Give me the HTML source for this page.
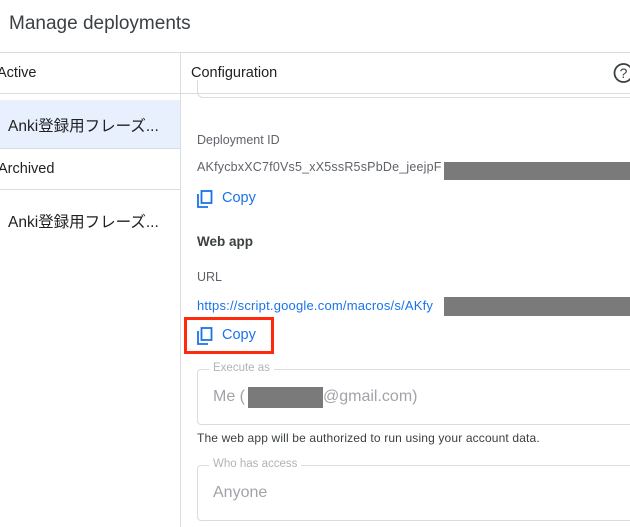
<!DOCTYPE html>
<html><head><meta charset="utf-8"><style>
*{margin:0;padding:0;box-sizing:border-box}
body{width:630px;height:527px;overflow:hidden;background:#fff;font-family:"Liberation Sans","Noto Sans CJK JP",sans-serif;color:#202124;position:relative}
.a{position:absolute;white-space:nowrap}
.hl{position:absolute;height:1px;background:#dadce0}
.vl{position:absolute;width:1px;background:#dadce0}
.blue{color:#1a73e8}
.gray{color:#5f6368}
.box{position:absolute;background:#7a7a7a}
.fs{position:absolute;border:1px solid #dadce0;border-radius:4px}
.lg{position:absolute;background:#fff;color:#b0b3b8;font-size:11.5px;padding:0 4px}
</style></head><body>
<div class="a" style="left:9px;top:13px;font-size:19px;color:#3c4043">Manage deployments</div>
<div class="hl" style="left:0;top:52px;width:630px"></div>
<div class="vl" style="left:180px;top:52px;height:475px"></div>
<div class="a" style="left:-3px;top:65px;font-size:14.5px">Active</div>
<div class="hl" style="left:0;top:93px;width:630px"></div>
<div style="position:absolute;left:0;top:100px;width:180px;height:48px;background:#e8f0fe"></div>
<div class="a" style="left:8px;top:114px;font-size:15.5px">Anki登録用フレーズ...</div>
<div class="hl" style="left:0;top:148px;width:180px"></div>
<div class="a" style="left:-2px;top:161px;font-size:14.5px">Archived</div>
<div class="hl" style="left:0;top:189px;width:180px"></div>
<div class="a" style="left:8px;top:210px;font-size:15.5px">Anki登録用フレーズ...</div>

<div class="a" style="left:191px;top:65px;font-size:14.5px">Configuration</div>
<svg class="a" style="left:612px;top:62px" width="24" height="22" viewBox="0 0 24 22"><circle cx="11.5" cy="11" r="9" fill="none" stroke="#3c4043" stroke-width="1.8"/><text x="11.5" y="16" font-size="14" text-anchor="middle" fill="#3c4043" font-family="Liberation Sans">?</text></svg>
<div style="position:absolute;left:197px;top:80px;width:440px;height:18px;border:1px solid #dadce0;border-top:none;border-radius:0 0 6px 6px"></div>

<div class="a gray" style="left:197px;top:133px;font-size:12.5px">Deployment ID</div>
<div class="a gray" style="left:197px;top:160px;font-size:12.5px;letter-spacing:0.2px">AKfycbxXC7f0Vs5_xX5ssR5sPbDe_jeejpF</div>
<div class="box" style="left:444px;top:162px;width:186px;height:18px"></div>
<svg class="a" style="left:197px;top:190px" width="16" height="18" viewBox="0 0 16 18"><path d="M1 4v13h10" fill="none" stroke="#1a73e8" stroke-width="1.8"/><rect x="4.5" y="1" width="10" height="12" fill="none" stroke="#1a73e8" stroke-width="1.8"/></svg>
<div class="a blue" style="left:222px;top:190px;font-size:14.5px">Copy</div>
<div class="a" style="left:197px;top:234px;font-size:13.5px;font-weight:bold;color:#3c4043">Web app</div>
<div class="a gray" style="left:197px;top:270px;font-size:12.5px">URL</div>
<div class="a blue" style="left:197px;top:298px;font-size:13px;letter-spacing:0.2px">https://script.google.com/macros/s/AKfy</div>
<div class="box" style="left:444px;top:297px;width:186px;height:19px"></div>
<div style="position:absolute;left:184px;top:317px;width:90px;height:37px;border:3px solid #ff2a0d"></div>
<svg class="a" style="left:197px;top:327px" width="16" height="18" viewBox="0 0 16 18"><path d="M1 4v13h10" fill="none" stroke="#1a73e8" stroke-width="1.8"/><rect x="4.5" y="1" width="10" height="12" fill="none" stroke="#1a73e8" stroke-width="1.8"/></svg>
<div class="a blue" style="left:222px;top:327px;font-size:14.5px">Copy</div>

<div class="fs" style="left:197px;top:369px;width:450px;height:56px"></div>
<div class="lg" style="left:209px;top:362px">Execute as</div>
<div class="a" style="left:213px;top:388px;font-size:16px;color:#a0a3a8">Me (</div>
<div class="a" style="left:323px;top:388px;font-size:16px;color:#a0a3a8">@gmail.com)</div>
<div class="box" style="left:248px;top:387px;width:75px;height:21px"></div>
<div class="a" style="left:197px;top:431px;font-size:12px;color:#3c4043;letter-spacing:0.15px">The web app will be authorized to run using your account data.</div>
<div class="fs" style="left:197px;top:465px;width:450px;height:56px"></div>
<div class="lg" style="left:209px;top:458px">Who has access</div>
<div class="a" style="left:213px;top:484px;font-size:16px;color:#a0a3a8">Anyone</div>
</body></html>
